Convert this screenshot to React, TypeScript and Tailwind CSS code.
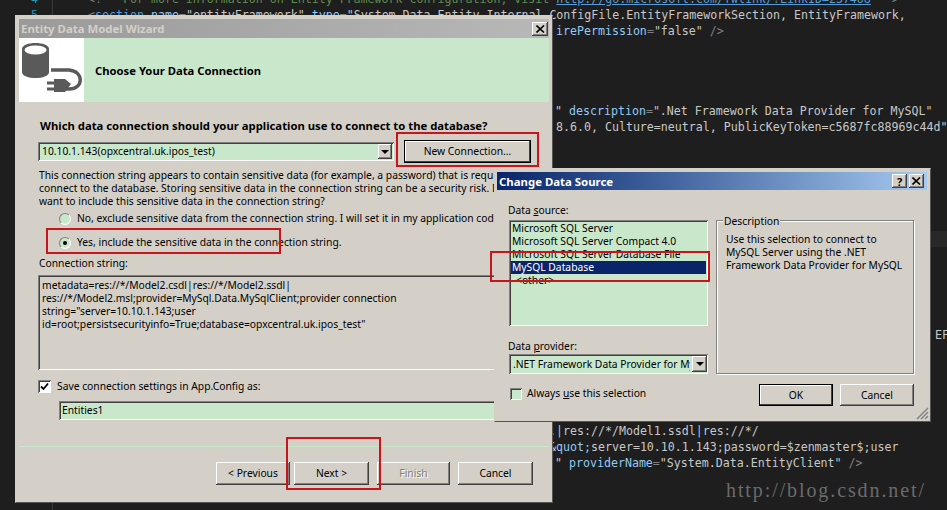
import React from 'react'

const raised = 'shadow-[inset_-1px_-1px_0_#404040,inset_1px_1px_0_#ffffff,inset_-2px_-2px_0_#808080]'
const sunken = 'shadow-[inset_1px_1px_0_#808080,inset_-1px_-1px_0_#ffffff,inset_2px_2px_0_#404040]'
const ui = 'font-["Noto_Sans","Liberation_Sans",sans-serif] text-[10.3px] leading-[13px] text-black whitespace-nowrap'

const Attr = ({ children }: { children: React.ReactNode }) => <span className="text-[#92caf4]">{children}</span>
const Dim = ({ children }: { children: React.ReactNode }) => <span className="text-[#808080]">{children}</span>

const rows: React.ReactNode[] = Array.from({ length: 32 }, () => null)
rows[0] = (
  <>
    <Dim>{'<!--'}</Dim>
    <span className="text-[#608b4e]"> For more information on Entity Framework configuration, visit </span>
    <span className="text-[#569cd6] underline">http://go.microsoft.com/fwlink/?LinkID=237468</span>
    <Dim> {'-->'}</Dim>
  </>
)
rows[1] = (
  <>
    <Dim>{'<'}</Dim>
    <span className="text-[#569cd6]">section</span> <Attr>name</Attr>
    <Dim>=</Dim>"entityFramework" <Attr>type</Attr>
    <Dim>=</Dim>"System.Data.Entity.Internal.ConfigFile.EntityFrameworkSection, EntityFramework,
  </>
)
rows[2] = (
  <span className="pl-[468px]">
    <Attr>irePermission</Attr>
    <Dim>=</Dim>"false" <Dim>{'/>'}</Dim>
  </span>
)
rows[7] = (
  <span className="pl-[467px]">
    " <Attr>description</Attr>
    <Dim>=</Dim>".Net Framework Data Provider for MySQL"
  </span>
)
rows[8] = <span className="pl-[468px]">8.6.0, Culture=neutral, PublicKeyToken=c5687fc88969c44d"</span>
rows[21] = <span className="pl-[847px]">EF</span>
rows[27] = (
  <span className="pl-[461px]">
    .<Attr>|</Attr>res://*/Model1.ssdl<Attr>|</Attr>res://*/
  </span>
)
rows[28] = (
  <span className="pl-[461px]">
    &amp;<Attr>quot;</Attr>server=10.10.1.143;password=$zenmaster$;user
  </span>
)
rows[29] = (
  <span className="pl-[467px]">
    " <Attr>providerName</Attr>
    <Dim>=</Dim>"System.Data.EntityClient" <Dim>{'/>'}</Dim>
  </span>
)

const Editor = () => (
  <div className="-mt-[9px] flex font-['DejaVu_Sans_Mono',monospace] text-[11.62px] leading-[16px] text-[#c8c8c8]">
    <div className="w-[53px] shrink-0 border-r border-[#3a3a3a] bg-[#1e1e1e] pr-[14px] text-right text-[#2b91af]">
      <div className="h-[16px]">4</div>
      <div className="h-[16px]">5</div>
      <div className="h-[512px]" />
    </div>
    <div className="flex-1">
      {rows.map((r, i) => (
        <div key={i} className={`h-[16px] whitespace-pre pl-[35px] ${i === 15 ? 'bg-[#282828]' : ''}`}>
          {r}
        </div>
      ))}
    </div>
  </div>
)

const Btn = ({ children, className = '', disabled }: { children: React.ReactNode; className?: string; disabled?: boolean }) => (
  <div
    className={`flex shrink-0 items-center justify-center bg-[#d4d0c8] ${raised} ${className} ${
      disabled ? 'text-[#808080] [text-shadow:1px_1px_0_#ffffff]' : ''
    }`}
  >
    {children}
  </div>
)

const Arrow = ({ className = '' }: { className?: string }) => (
  <div className={`flex items-center justify-center bg-[#d4d0c8] ${raised} ${className}`}>
    <div className="h-0 w-0 border-x-[4px] border-t-[4px] border-x-transparent border-t-black" />
  </div>
)

const CloseGlyph = () => (
  <svg width="9" height="8" viewBox="0 0 9 8">
    <path d="M0.5 0.5 L8 7.5 M8 0.5 L0.5 7.5" stroke="#000" strokeWidth="1.6" fill="none" />
  </svg>
)

const DbIcon = () => (
  <svg width="65" height="64" viewBox="0 0 65 64">
    <path d="M3 11 C3 3 30 3 30 11 V34 C30 42 3 42 3 34 Z" fill="#5a5a5a" />
    <ellipse cx="16.5" cy="12" rx="11" ry="4.5" fill="#ffffff" />
    <path d="M32 32 H50 C65 33 65 51 50 51 H47" stroke="#5a5a5a" strokeWidth="3.4" fill="none" />
    <path d="M35 41 H46 L52 46 L46 54 H35 Z" fill="#5a5a5a" />
    <rect x="28" y="43.5" width="7" height="3" fill="#5a5a5a" />
    <rect x="28" y="49.5" width="7" height="3" fill="#5a5a5a" />
  </svg>
)

const Radio = ({ checked }: { checked?: boolean }) => (
  <div className="flex h-[12px] w-[12px] shrink-0 items-center justify-center rounded-full border border-t-[#808080] border-l-[#808080] border-r-white border-b-white bg-[#c9e7cb]">
    {checked && <div className="h-[4px] w-[4px] rounded-full bg-black" />}
  </div>
)

const Wizard = () => (
  <div className={`absolute left-[15px] top-[15px] flex h-[488px] w-[538px] flex-col border border-t-[#d4d0c8] border-l-[#d4d0c8] border-r-[#555555] border-b-[#555555] bg-[#d4d0c8] p-[3px] ${ui}`}>
    <div className="flex h-[19px] shrink-0 items-center justify-between bg-gradient-to-r from-[#9a9a9a] to-[#b8b8b8] pl-[2px] pr-[1px]">
      <span className="text-[11.4px] font-bold text-[#d4d0c8]">Entity Data Model Wizard</span>
      <Btn className="h-[14px] w-[16px]">
        <CloseGlyph />
      </Btn>
    </div>
    <div className="flex h-[64px] shrink-0 items-center bg-[#c9e7cb]">
      <div className="h-full w-[65px] bg-white">
        <DbIcon />
      </div>
      <span className="ml-[11px] text-[11.25px] font-bold">Choose Your Data Connection</span>
    </div>
    <div className="flex flex-col overflow-hidden pl-[19px] pr-[18px]">
      <div className="ml-[2px] mt-[17px] text-[11.3px] font-bold">Which data connection should your application use to connect to the database?</div>
      <div className="mt-[8px] flex items-center gap-[10px]">
        <div className={`flex h-[19px] w-[358px] items-center justify-between bg-[#c9e7cb] pl-[4px] pr-[2px] ${sunken}`}>
          <span>10.10.1.143(opxcentral.uk.ipos_test)</span>
          <Arrow className="h-[15px] w-[14px]" />
        </div>
        <Btn className="h-[23px] w-[127px] shadow-[inset_0_0_0_1px_#000000,inset_-2px_-2px_0_#404040,inset_2px_2px_0_#ffffff]">New Connection...</Btn>
      </div>
      <div className="ml-[1px] mt-[6px] w-[520px]">
        <div>This connection string appears to contain sensitive data (for example, a password) that is required to</div>
        <div>connect to the database. Storing sensitive data in the connection string can be a security risk. Do you</div>
        <div>want to include this sensitive data in the connection string?</div>
      </div>
      <div className="ml-[21px] mt-[4px] flex items-center gap-[6px]">
        <Radio />
        <span>No, exclude sensitive data from the connection string. I will set it in my application code.</span>
      </div>
      <div className="ml-[21px] mt-[11px] flex items-center gap-[6px]">
        <Radio checked />
        <span>Yes, include the sensitive data in the connection string.</span>
      </div>
      <div className="ml-[1px] mt-[8px]">Connection string:</div>
      <div className={`mt-[5px] h-[95px] w-[490px] shrink-0 py-[4px] pl-[4px] pr-[8px] ${sunken}`}>
        <div>metadata=res://*/Model2.csdl|res://*/Model2.ssdl|</div>
        <div>res://*/Model2.msl;provider=MySql.Data.MySqlClient;provider connection</div>
        <div>string="server=10.10.1.143;user</div>
        <div>id=root;persistsecurityinfo=True;database=opxcentral.uk.ipos_test"</div>
      </div>
      <div className="mt-[10px] flex items-center gap-[6px]">
        <div className={`flex h-[13px] w-[13px] shrink-0 items-center justify-center bg-white ${sunken}`}>
          <svg width="9" height="9" viewBox="0 0 9 9">
            <path d="M1 4.5 L3.5 7 L8 1.5" stroke="#000" strokeWidth="1.8" fill="none" />
          </svg>
        </div>
        <span>Save connection settings in App.Config as:</span>
      </div>
      <div className={`ml-[21px] mt-[8px] flex h-[19px] w-[469px] shrink-0 items-center bg-[#c9e7cb] pl-[3px] ${sunken}`}>Entities1</div>
    </div>
    <div className="mt-[26px] h-[1px] shrink-0 bg-[#c9e7cb]" />
    <div className="mt-[15px] flex justify-end pr-[16px]">
      <Btn className="h-[23px] w-[74px]">{'< Previous'}</Btn>
      <Btn className="ml-[4px] h-[23px] w-[75px]">{'Next >'}</Btn>
      <Btn className="ml-[8px] h-[23px] w-[73px]" disabled>
        Finish
      </Btn>
      <Btn className="ml-[8px] h-[23px] w-[75px]">Cancel</Btn>
    </div>
  </div>
)

const DataSourceDialog = () => (
  <div className={`absolute left-[494px] top-[168px] flex h-[254px] w-[437px] flex-col border border-t-[#d4d0c8] border-l-[#d4d0c8] border-r-[#555555] border-b-[#555555] bg-[#d4d0c8] pb-[3px] pl-[2px] pr-[3px] pt-[3px] ${ui}`}>
    <div className="flex h-[18px] shrink-0 items-center justify-between bg-gradient-to-r from-[#0a246a] to-[#a6caf0] pl-[2px] pr-[3px]">
      <span className="text-[11.4px] font-bold text-white">Change Data Source</span>
      <div className="flex gap-[2px]">
        <Btn className="h-[14px] w-[15px] text-[11px] font-bold">?</Btn>
        <Btn className="h-[14px] w-[15px]">
          <CloseGlyph />
        </Btn>
      </div>
    </div>
    <div className="flex pl-[12px]">
      <div className="flex w-[199px] shrink-0 flex-col">
        <div className="ml-[-1px] mt-[14px]">
          Data <u>s</u>ource:
        </div>
        <div className={`mt-[3px] h-[106px] bg-[#c9e7cb] px-[2px] ${sunken}`}>
          <div className="pl-[1px] pt-[2px]">Microsoft SQL Server</div>
          <div className="pl-[1px]">Microsoft SQL Server Compact 4.0</div>
          <div className="pl-[1px]">Microsoft SQL Server Database File</div>
          <div className="bg-[#0a246a] pl-[1px] text-white">MySQL Database</div>
          <div className="pl-[5px]">{'<other>'}</div>
        </div>
        <div className="ml-[-1px] mt-[14px]">
          Data <u>p</u>rovider:
        </div>
        <div className={`mt-[1px] flex h-[20px] items-center justify-between bg-[#c9e7cb] pl-[4px] pr-[1px] ${sunken}`}>
          <span className="w-[177px] overflow-hidden">.NET Framework Data Provider for MySQL</span>
          <Arrow className="h-[16px] w-[15px]" />
        </div>
        <div className="mt-[13px] flex items-center gap-[5px] pl-[1px]">
          <div className={`h-[12px] w-[12px] shrink-0 bg-[#c9e7cb] ${sunken}`} />
          <span>
            Always <u>u</u>se this selection
          </span>
        </div>
      </div>
      <div className="ml-[8px] flex flex-1 flex-col pr-[13px]">
        <div className="relative mt-[30px] h-[154px] border border-[#808080] pl-[9px] pt-[12px] shadow-[1px_1px_0_#ffffff,inset_1px_1px_0_#ffffff]">
          <span className="absolute left-[6px] top-[-6px] bg-[#d4d0c8] px-[1px]">Description</span>
          <div>Use this selection to connect to</div>
          <div>MySQL Server using the .NET</div>
          <div>Framework Data Provider for MySQL</div>
        </div>
        <div className="mt-[10px] flex justify-end gap-[7px]">
          <Btn className="h-[22px] w-[74px] shadow-[inset_0_0_0_1px_#000000,inset_-2px_-2px_0_#404040,inset_2px_2px_0_#ffffff]">OK</Btn>
          <Btn className="h-[22px] w-[74px]">Cancel</Btn>
        </div>
      </div>
    </div>
    <svg className="absolute bottom-[1px] right-[1px]" width="14" height="14" viewBox="0 0 14 14">
      <path d="M13 2 L2 13 M13 6 L6 13 M13 10 L10 13" stroke="#808080" strokeWidth="1.4" fill="none" />
    </svg>
  </div>
)

export default function App() {
  return (
    <div className="relative h-[510px] w-[947px] overflow-hidden bg-[#1e1e1e]">
      <Editor />
      <Wizard />
      <DataSourceDialog />
      {/* annotations */}
      <div className="absolute left-[396px] top-[132px] h-[35px] w-[143px] border-[2px] border-[#c8141a]" />
      <div className="absolute left-[46px] top-[228px] h-[26px] w-[235px] border-[2px] border-[#c8141a]" />
      <div className="absolute left-[286px] top-[437px] h-[53px] w-[95px] border-[2px] border-[#c8141a]" />
      <div className="absolute left-[490px] top-[251px] h-[31px] w-[220px] border-[2px] border-[#c8141a]" />
      <div className="absolute left-[726px] top-[478px] font-['Liberation_Serif',serif] text-[20px] leading-[24px] tracking-[1.9px] text-[#6b6b6b]">http://blog.csdn.net/</div>
    </div>
  )
}
